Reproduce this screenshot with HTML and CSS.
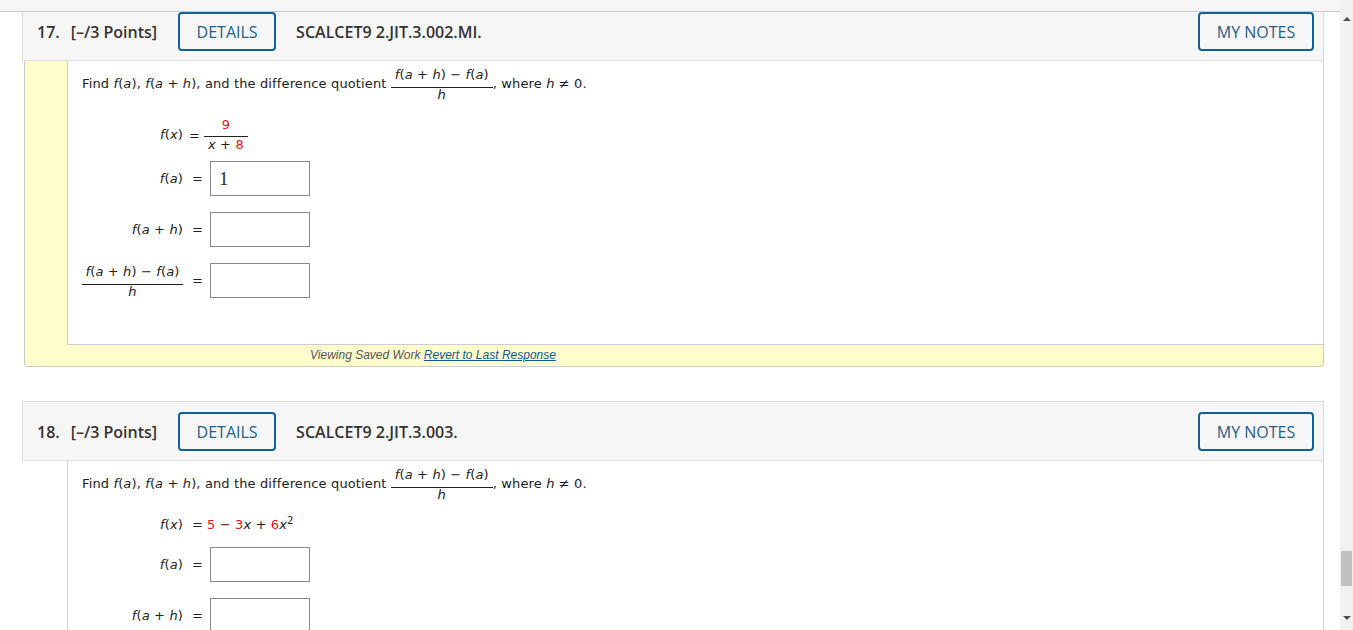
FILE: index.html
```html
<!DOCTYPE html>
<html lang="en">
<head>
<meta charset="utf-8">
<title>Assignment</title>
<link rel="stylesheet" href="styles.css">
</head>
<body>
<div class="page">
  <main class="main">
    <div class="top-strip"></div>

    <section class="question">
      <header class="q-header q-header--cut">
        <span class="q-num">17.</span>
        <span class="q-points">[–/3 Points]</span>
        <button class="btn btn-details">DETAILS</button>
        <span class="q-code">SCALCET9 2.JIT.3.002.MI.</span>
        <button class="btn btn-notes">MY NOTES</button>
      </header>
      <div class="saved">
        <div class="panel panel--saved">
          <p class="prompt">Find <i>f</i>(<i>a</i>), <i>f</i>(<i>a</i> + <i>h</i>), and the difference quotient <span class="frac"><span class="num"><i>f</i>(<i>a</i> + <i>h</i>) − <i>f</i>(<i>a</i>)</span><span class="den"><i>h</i></span></span>, where <i>h</i> ≠ 0.</p>
          <div class="fx fx--frac">
            <span class="lbl"><i>f</i>(<i>x</i>)</span>
            <span class="eq">=</span>
            <span class="val"><span class="frac frac--tight"><span class="num"><span class="red">9</span></span><span class="den"><i>x</i> + <span class="red">8</span></span></span></span>
          </div>
          <div class="answers">
            <span class="lbl"><i>f</i>(<i>a</i>)</span>
            <span class="eq">=</span>
            <span class="box"><span class="box-val">1</span></span>

            <span class="lbl"><i>f</i>(<i>a</i> + <i>h</i>)</span>
            <span class="eq">=</span>
            <span class="box"></span>

            <span class="lbl"><span class="frac frac--label"><span class="num"><i>f</i>(<i>a</i> + <i>h</i>) − <i>f</i>(<i>a</i>)</span><span class="den"><i>h</i></span></span></span>
            <span class="eq">=</span>
            <span class="box"></span>
          </div>
        </div>
        <div class="saved-footer">Viewing Saved Work <a class="revert" href="#">Revert to Last Response</a></div>
      </div>
    </section>

    <section class="question question--next">
      <header class="q-header">
        <span class="q-num">18.</span>
        <span class="q-points">[–/3 Points]</span>
        <button class="btn btn-details">DETAILS</button>
        <span class="q-code">SCALCET9 2.JIT.3.003.</span>
        <button class="btn btn-notes">MY NOTES</button>
      </header>
      <div class="panel panel--plain">
        <p class="prompt">Find <i>f</i>(<i>a</i>), <i>f</i>(<i>a</i> + <i>h</i>), and the difference quotient <span class="frac"><span class="num"><i>f</i>(<i>a</i> + <i>h</i>) − <i>f</i>(<i>a</i>)</span><span class="den"><i>h</i></span></span>, where <i>h</i> ≠ 0.</p>
        <div class="fx fx--line">
          <span class="lbl"><i>f</i>(<i>x</i>)</span>
          <span class="eq">=</span>
          <span class="val"><span class="red">5</span> − <span class="red">3</span><i>x</i> + <span class="red">6</span><i>x</i><sup>2</sup></span>
        </div>
        <div class="answers">
          <span class="lbl"><i>f</i>(<i>a</i>)</span>
          <span class="eq">=</span>
          <span class="box"></span>

          <span class="lbl"><i>f</i>(<i>a</i> + <i>h</i>)</span>
          <span class="eq">=</span>
          <span class="box"></span>
        </div>
      </div>
    </section>
  </main>

  <div class="scrollbar">
    <span class="sb-arrow sb-arrow--up"></span>
    <span class="sb-track"></span>
    <span class="sb-thumb"></span>
    <span class="sb-arrow sb-arrow--down"></span>
  </div>
</div>
</body>
</html>
```

FILE: styles.css
```css
html, body {
  margin: 0;
  padding: 0;
  height: 630px;
  overflow: hidden;
  background: #ffffff;
}

body {
  font-family: "DejaVu Sans", Verdana, sans-serif;
  font-size: 13px;
  color: #222222;
}

.page {
  display: flex;
  height: 630px;
}

.main {
  flex: 0 0 1340px;
  overflow: hidden;
}

.top-strip {
  height: 11px;
  background: #f6f6f6;
  border-bottom: 1px solid #c9c9c9;
}

/* ---------- question ---------- */
.question {
  margin-left: 22px;
  width: 1302px;
}

.question--next {
  margin-top: 34px;
}

.q-header {
  display: flex;
  align-items: center;
  background: #f6f6f6;
  border: 1px solid #dddddd;
  padding: 10px 9px 9px 14px;
  font-family: "Open Sans", "Liberation Sans", sans-serif;
  font-size: 16px;
  color: #333333;
}

.q-header--cut {
  border-top: none;
  padding-top: 0;
}

.q-num {
  font-weight: 600;
}

.q-points {
  font-weight: 600;
  margin-left: 11px;
}

.q-code {
  font-weight: 600;
  margin-left: 20px;
}

.btn {
  box-sizing: border-box;
  height: 39px;
  border: 2px solid #0f6199;
  border-radius: 4px;
  background: transparent;
  color: #1d5f8e;
  font-family: "Open Sans", "Liberation Sans", sans-serif;
  font-size: 16px;
  padding: 0;
  cursor: pointer;
}

.btn-details {
  width: 98px;
  margin-left: 21px;
}

.btn-notes {
  width: 116px;
  margin-left: auto;
}

/* ---------- saved work box ---------- */
.saved {
  margin-left: 2px;
  background: #fffdcc;
  border: 1px solid #cccccc;
  border-top: none;
  border-radius: 0 0 4px 4px;
  padding-left: 42px;
}

.panel {
  background: #ffffff;
  border-left: 1px solid #cccccc;
  padding: 6px 14px 0;
  letter-spacing: 0.13px;
}

.panel--saved {
  border-bottom: 1px solid #cccccc;
  height: 277px;
}

.panel--plain {
  margin-left: 45px;
  border-right: 1px solid #cccccc;
  height: 200px;
}

.saved-footer {
  height: 21px;
  line-height: 21px;
  padding-left: 243px;
  font-family: "Liberation Sans", Arial, sans-serif;
  font-style: italic;
  font-size: 12px;
  color: #555555;
}

.revert {
  color: #0f5a98;
  text-decoration: underline;
}

/* ---------- math ---------- */
.prompt {
  margin: 0;
  line-height: 18px;
}

.red {
  color: #f01010;
}

.frac {
  display: inline-flex;
  flex-direction: column;
  vertical-align: middle;
  text-align: center;
}

.frac .num {
  line-height: 16px;
  padding: 0 4px 4px;
}

.frac .den {
  line-height: 14px;
  border-top: 1px solid #222222;
  padding: 0 4px;
}

.frac--tight .num {
  padding: 0 4px 3px;
}

.frac--tight .den {
  line-height: 16px;
}

.frac--label {
  width: 101px;
  margin-top: 1px;
  margin-bottom: -1px;
}

.frac--label .num,
.frac--label .den {
  padding-left: 0;
  padding-right: 0;
}

.fx,
.answers {
  display: grid;
  grid-template-columns: 101px auto auto;
  justify-content: start;
  align-items: center;
}

.fx--frac {
  margin-top: 15px;
  margin-bottom: 8px;
}

.fx--frac .eq {
  padding: 0 4px 0 6px;
}

.fx--line {
  margin-top: 12px;
  line-height: 22px;
  margin-bottom: 11px;
}

.fx--line .eq {
  padding: 0 4px 0 9px;
}

.answers {
  row-gap: 16px;
}

.lbl {
  justify-self: end;
  line-height: 18px;
}

.eq {
  padding: 0 7px 0 9px;
}

sup {
  font-size: 10px;
  line-height: 0;
  vertical-align: 5px;
}

.box {
  box-sizing: border-box;
  width: 100px;
  height: 35px;
  border: 1px solid #8a8a8a;
  background: #ffffff;
  display: flex;
  align-items: center;
  padding-left: 8px;
}

.box-val {
  font-family: "Liberation Serif", "Times New Roman", serif;
  font-size: 19px;
  color: #2a2a2a;
}

/* ---------- scrollbar ---------- */
.scrollbar {
  flex: 0 0 13px;
  background: #f1f1f1;
  display: flex;
  flex-direction: column;
  align-items: center;
}

.sb-arrow {
  width: 0;
  height: 0;
  border-left: 4px solid transparent;
  border-right: 4px solid transparent;
}

.sb-arrow--up {
  margin-top: 17px;
  border-bottom: 4px solid #505050;
}

.sb-arrow--down {
  margin-top: 30px;
  margin-bottom: 10px;
  border-top: 4px solid #505050;
}

.sb-track {
  flex: 1;
}

.sb-thumb {
  width: 11px;
  height: 35px;
  background: #c1c1c1;
}
```
